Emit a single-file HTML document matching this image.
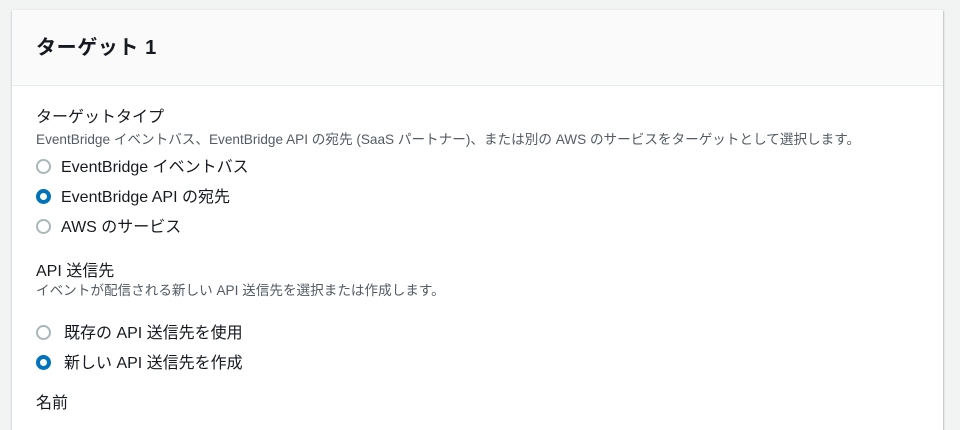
<!DOCTYPE html>
<html><head><meta charset="utf-8"><style>
*{margin:0;padding:0;box-sizing:border-box}
body{width:960px;height:403px;overflow:hidden;background:#f2f3f3;font-family:"Liberation Sans","Noto Sans CJK JP",sans-serif;color:#16191f;position:relative}
.card{position:absolute;left:12px;top:10px;width:931px;height:420px;background:#fff;box-shadow:0 1px 2px rgba(0,28,36,.3),1px 1px 1px rgba(0,28,36,.1)}
.hdr{height:76px;background:#fafafa;border-bottom:1px solid #eaeded;position:relative}
.hdr h2{position:absolute;left:24px;top:21px;font-size:20px;font-weight:bold;letter-spacing:0.6px}
.t{position:absolute;white-space:nowrap}
.lab{font-size:16px;left:36px}
.desc{font-size:13.6px;color:#545b64;left:36px}
.r{position:absolute;left:36px;width:15px;height:15px;border-radius:50%;border:2px solid #aab7b8;background:#fff}
.r.on{border:4px solid #0073bb}
.opt{font-size:16px;left:61px}
</style></head><body>
<div class="card"><div class="hdr"><h2>ターゲット 1</h2></div></div>
<div class="t lab" style="top:103px">ターゲットタイプ</div>
<div class="t desc" style="top:128px">EventBridge イベントバス、EventBridge API の宛先 (SaaS パートナー)、または別の AWS のサービスをターゲットとして選択します。</div>
<div class="r" style="top:159px"></div><div class="t opt" style="top:153px">EventBridge イベントバス</div>
<div class="r on" style="top:189px"></div><div class="t opt" style="top:183px">EventBridge API の宛先</div>
<div class="r" style="top:219px"></div><div class="t opt" style="top:213px">AWS のサービス</div>
<div class="t lab" style="top:257px">API 送信先</div>
<div class="t desc" style="top:279px">イベントが配信される新しい API 送信先を選択または作成します。</div>
<div class="r" style="top:325px"></div><div class="t opt" style="top:319px;left:64px">既存の API 送信先を使用</div>
<div class="r on" style="top:355px"></div><div class="t opt" style="top:349px;left:64px">新しい API 送信先を作成</div>
<div class="t lab" style="top:389px">名前</div>
</body></html>
